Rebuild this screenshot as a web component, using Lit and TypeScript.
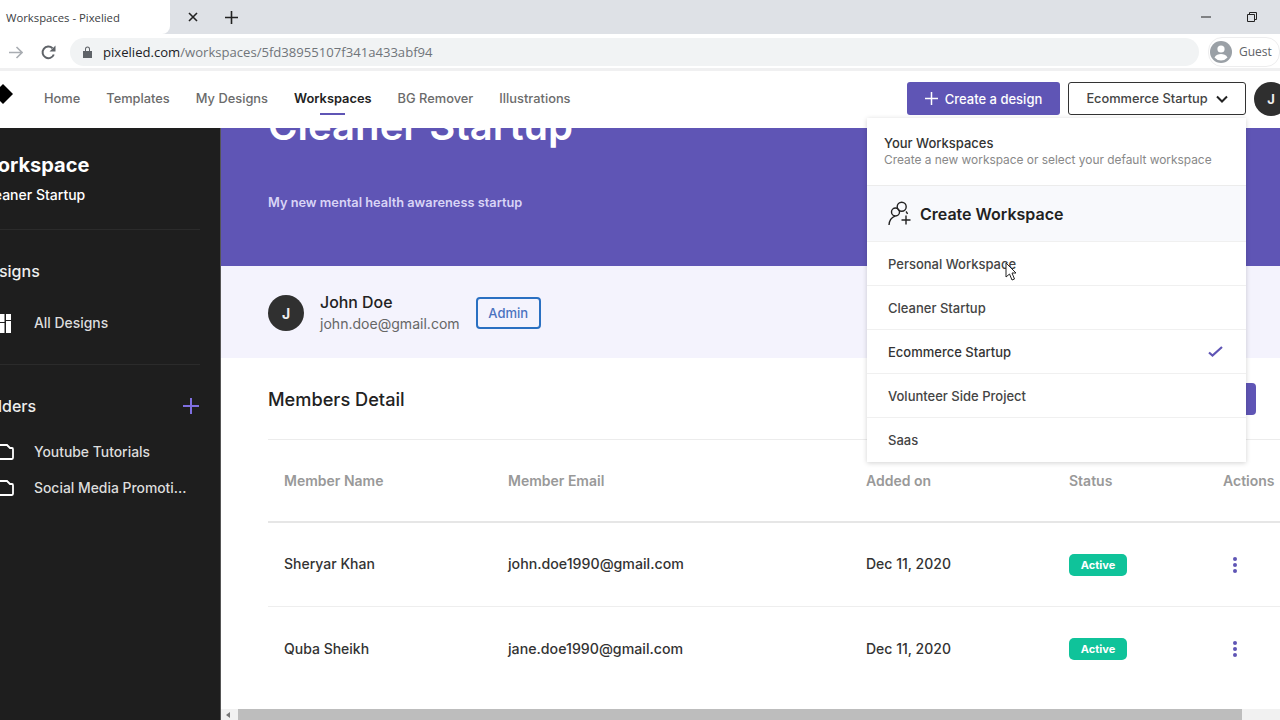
import { LitElement, html, css } from 'lit';
import { customElement } from 'lit/decorators.js';

const members = [
  { name: 'Sheryar Khan', email: 'john.doe1990@gmail.com' },
  { name: 'Quba Sheikh', email: 'jane.doe1990@gmail.com' },
];

const workspaces = ['Personal Workspace', 'Cleaner Startup', 'Ecommerce Startup', 'Volunteer Side Project', 'Saas'];

const folderIcon = html`<svg width="23" height="16" viewBox="0 0 23 16" fill="none" stroke="#fff" stroke-width="1.8"><path d="M0 1h16l3 3h2q1 0 1 1.5v8q0 1.5-1 1.5H0"/></svg>`;

@customElement('app-root')
export class AppRoot extends LitElement {
  static styles = css`
    :host {
      display: block;
      width: 1280px;
      height: 720px;
      position: relative;
      overflow: hidden;
      background: #fff;
      font-family: Inter, 'Liberation Sans', sans-serif;
      color: #222;
    }
    svg { display: block; flex: none; }

    /* browser chrome */
    .tabstrip { height: 34px; background: #dee1e6; display: flex; align-items: center; }
    .tab {
      width: 170px; height: 34px; background: #fff; border-bottom-right-radius: 8px;
      display: flex; align-items: center; padding-left: 6px; box-sizing: border-box;
      font: 11.3px 'Open Sans', 'Liberation Sans', sans-serif; color: #3c4043;
      flex: none; position: relative;
    }
    .tab-x { position: absolute; left: 188px; }
    .tab-plus { margin-left: 55px; }
    .winbtns { margin-left: auto; display: flex; align-items: center; gap: 36px; padding-right: 23px; }
    .toolbar {
      height: 34px; border-bottom: 3px solid #f0f0f1; display: flex; align-items: center;
      padding-left: 9px;
    }
    .tool-back { margin-top: 2px; }
    .tool-reload { margin-left: 18px; margin-top: 2px; }
    .address {
      flex: none; width: 1129px; height: 28px; margin-left: 14px; border-radius: 14px; background: #f1f3f4;
      display: flex; align-items: center; padding-left: 13px; box-sizing: border-box; margin-top: 1px;
      font: 13.1px 'Open Sans', 'Liberation Sans', sans-serif; color: #70757a;
    }
    .address b { font-weight: 400; color: #202124; }
    .lock { margin-right: 11px; }
    .guest {
      margin-left: 9px; height: 28px; flex: 1; display: flex; align-items: center; gap: 7px;
      border: 1px solid #ededee; border-radius: 14px; padding-left: 1px; margin-top: 1px;
      font: 12px 'Open Sans', 'Liberation Sans', sans-serif; color: #5f6368;
    }

    /* app nav */
    .nav {
      height: 57px; box-sizing: border-box; display: flex; align-items: center; position: relative;
      padding-bottom: 2px; background: #fff; z-index: 2;
    }
    .logo { width: 13px; height: 20px; margin-right: 31px; margin-top: -9px; flex: none; }
    .links { display: flex; gap: 26px; font-size: 12.85px; font-weight: 500; color: #6b6b6b; }
    .links a { position: relative; white-space: nowrap; }
    .links a.on { color: #222; font-weight: 600; }
    .links a.on::after {
      content: ''; position: absolute; left: 26px; width: 25px; height: 2px; bottom: -9px; background: #5f55b5;
    }
    .nav-right { margin-left: auto; display: flex; align-items: center; margin-right: -8px; }
    .create {
      width: 153px; height: 33px; background: #5f55b5; border-radius: 3px; color: #fff;
      display: flex; align-items: center; justify-content: center; gap: 7px; font-size: 13px; font-weight: 500;
    }
    .switch {
      width: 178px; height: 33px; box-sizing: border-box; margin-left: 8px; border: 1.5px solid #333;
      border-radius: 3px; display: flex; align-items: center; justify-content: center; gap: 8px;
      font-size: 12.8px; font-weight: 500; color: #444;
    }
    .nav-avatar {
      width: 34px; height: 34px; margin-left: 8px; border-radius: 50%; background: #2f2f2f; color: #eee;
      display: flex; align-items: center; justify-content: center; font-size: 13px; font-weight: 700;
    }

    /* main */
    .main { display: flex; height: 592px; }
    .side {
      width: 221px; flex: none; background: #1e1e1e; color: #fff; overflow: hidden;
      border-right: 1px solid #555; box-sizing: border-box; display: flex; flex-direction: column;
    }
    .side-head { padding: 24px 20px 0 0; margin-left: -22px; height: 77px; box-sizing: border-box; }
    .side-head h2 { margin: 0; font-size: 20px; font-weight: 700; line-height: 26px; }
    .side-head p { margin: 7px 0 0 2px; font-size: 14px; font-weight: 500; line-height: 20px; white-space: nowrap; }
    .divider { height: 1px; background: #2b2b2b; margin-right: 20px; margin-top: 24px; }
    .divider.lower { margin-top: 23px; }
    .sec-title {
      display: flex; align-items: center; justify-content: space-between; margin: 31px 21px 0 0;
      font-size: 16px; font-weight: 500; line-height: 20px; color: #eee;
    }
    .sec-title.designs { margin-left: -22px; }
    .sec-title.folders { margin-left: -20.5px; }
    .item {
      display: flex; align-items: center; font-size: 13.9px; font-weight: 500; color: #ddd; line-height: 20px;
      height: 36px; white-space: nowrap;
    }
    .item.first-design { margin-top: 24px; }
    .item.first-folder { margin-top: 18px; }
    .item svg { margin-left: -9px; }
    .item.first-design svg { margin-right: 23px; }
    .item.folder svg { margin-right: 20px; }
    .content { flex: 1; min-width: 0; display: flex; flex-direction: column; overflow: hidden; }
    .scroller { flex: 1; min-height: 0; overflow: hidden; }
    .banner { height: 138px; background: #5f55b5; padding-left: 47px; overflow: hidden; }
    .banner h1 {
      margin: -25px 0 0; font-size: 40.1px; font-weight: 600; line-height: 46px; color: #fff; white-space: nowrap;
    }
    .banner p { margin: 45px 0 0; font-size: 12.8px; font-weight: 600; line-height: 18px; color: #d9d4f6; }
    .owner {
      height: 92px; box-sizing: border-box; background: #f4f3fd; padding: 2px 0 0 47px; display: flex; align-items: center;
    }
    .avatar {
      width: 36px; height: 36px; border-radius: 50%; background: #303030; color: #eee; font-size: 14px;
      font-weight: 700; display: flex; align-items: center; justify-content: center; margin-right: 16px;
    }
    .owner-name { font-size: 15.9px; font-weight: 500; line-height: 20px; color: #222; margin-top: 1px; }
    .owner-mail { font-size: 14.05px; line-height: 20px; color: #666; margin-top: 1px; }
    .role {
      width: 65px; height: 32px; box-sizing: border-box; border: 2px solid #2a70c2; border-radius: 4px;
      margin-left: 16px; color: #4a72c0; font-size: 13px; font-weight: 500;
      display: flex; align-items: center; justify-content: center;
    }
    .members { margin-left: 47px; }
    .members-head {
      height: 82px; box-sizing: border-box; display: flex; align-items: center; justify-content: space-between;
      border-bottom: 1px solid #ececec; padding-right: 24px;
    }
    .members-head h3 { margin: 0; font-size: 18.2px; font-weight: 500; color: #222; }
    .add { width: 120px; height: 32px; background: #5f55b5; border-radius: 4px; }
    .row {
      display: grid; grid-template-columns: 224px 358px 203px 154px 80px; padding-left: 16px;
      align-items: center; white-space: nowrap; font-size: 14px; font-weight: 500; color: #333;
      height: 84px; border-bottom: 1px solid #eee; width: 1040px; box-sizing: border-box;
    }
    .row.head { height: 83px; border-bottom: 2px solid #e6e6e6; font-weight: 600; color: #999; }
    .row:last-child { border-bottom: none; }
    .cell { margin-top: -2px; }
    .mail { font-size: 14.2px; }
    .badge {
      width: 58px; height: 22px; border-radius: 5px; background: #0fc39a; color: #fff; font-size: 11px;
      font-weight: 700; display: flex; align-items: center; justify-content: center;
    }
    .dots { margin-left: 10px; }
    .hscroll { height: 11px; flex: none; background: #f1f1f1; display: flex; align-items: center; padding-left: 5px; }
    .thumb { height: 11px; width: 1004px; margin-left: 8px; background: #bdbdbd; }
    .arrow { width: 0; height: 0; border: 3.5px solid transparent; border-right: 4px solid #777; border-left: 0; }

    /* workspace menu */
    .menu {
      position: absolute; left: 867px; top: 118px; width: 379px; background: #fff; z-index: 3;
      box-shadow: 0 1px 5px rgba(0, 0, 0, 0.18);
    }
    .menu-head { height: 68px; box-sizing: border-box; padding: 17px 17px 0; border-bottom: 1px solid #ececec; }
    .menu-title { font-size: 13px; font-weight: 500; line-height: 16px; color: #333; }
    .menu-sub { font-size: 11.9px; line-height: 17px; color: #888; white-space: nowrap; }
    .menu-create {
      height: 56px; background: #f8f9fc; display: flex; align-items: center; padding-left: 21px; gap: 7px;
      font-size: 16px; font-weight: 600; color: #222; border-bottom: 1px solid #f0f0f0; box-sizing: border-box;
    }
    .menu-item {
      height: 44px; box-sizing: border-box; display: flex; align-items: center; justify-content: space-between;
      padding: 0 23px 0 21px; font-size: 13px; font-weight: 500; color: #444; border-bottom: 1px solid #f0f0f0;
    }
    .menu-item:last-child { border-bottom: none; }
    .menu-item.on { color: #333; }
    .cursor { position: absolute; left: 1005px; top: 262px; z-index: 4; }
  `;

  render() {
    return html`
      <div class="tabstrip">
        <div class="tab">
          Workspaces - Pixelied
          <svg class="tab-x" width="10" height="10" viewBox="0 0 10 10" stroke="#222" stroke-width="1.6"><path d="M1 1l8 8M9 1l-8 8"/></svg>
        </div>
        <svg class="tab-plus" width="13" height="13" viewBox="0 0 13 13" stroke="#222" stroke-width="1.6"><path d="M6.5 0v13M0 6.5h13"/></svg>
        <div class="winbtns">
          <svg width="10" height="10" viewBox="0 0 10 10" stroke="#222" stroke-width="1"><path d="M0 5h10"/></svg>
          <svg width="10" height="10" viewBox="0 0 10 10" fill="none" stroke="#222" stroke-width="1"><path d="M.5 2.5h7v7h-7zM2.5 2.5v-2h7v7h-2"/></svg>
        </div>
      </div>
      <div class="toolbar">
        <svg class="tool-back" width="14" height="13" viewBox="0 0 14 13" fill="none" stroke="#a9adb2" stroke-width="1.6"><path d="M0 6.5h13M7.5 1l5.5 5.5-5.5 5.5"/></svg>
        <svg class="tool-reload" width="15" height="15" viewBox="0 0 15 15" fill="none" stroke="#5f6368" stroke-width="2"><path d="M12.8 9.5A5.8 5.8 0 1 1 11.5 3.3"/><path d="M14.5 .5v6h-6z" fill="#5f6368" stroke="none"/></svg>
        <div class="address">
          <svg class="lock" width="9" height="12" viewBox="0 0 9 12"><path fill="#5f6368" d="M0 5h9v7H0zM2 5V3a2.5 2.5 0 0 1 5 0v2H6V3a1.5 1.5 0 0 0-3 0v2z"/></svg>
          <span><b>pixelied.com</b>/workspaces/5fd38955107f341a433abf94</span>
        </div>
        <div class="guest">
          <svg width="22" height="22" viewBox="0 0 22 22"><circle cx="11" cy="11" r="11" fill="#9aa0a6"/><circle cx="11" cy="8" r="3.6" fill="#fff"/><path fill="#fff" d="M4.5 16.5c1.4-2.6 4-3.5 6.5-3.5s5.1.9 6.5 3.5a8.5 8.5 0 0 1-13 0z"/></svg>
          Guest
        </div>
      </div>

      <div class="nav">
        <svg class="logo" viewBox="0 0 13 20"><path d="M3 0l10 10-10 10L-7 10z" fill="#000"/></svg>
        <div class="links">
          <a>Home</a><a>Templates</a><a>My Designs</a><a class="on">Workspaces</a><a>BG Remover</a><a>Illustrations</a>
        </div>
        <div class="nav-right">
          <div class="create">
            <svg width="13" height="13" viewBox="0 0 13 13" stroke="#fff" stroke-width="1.5"><path d="M6.5 0v13M0 6.5h13"/></svg>
            Create a design
          </div>
          <div class="switch">
            Ecommerce Startup
            <svg width="12" height="8" viewBox="0 0 12 8" fill="none" stroke="#222" stroke-width="2"><path d="M1 1.5l5 5 5-5"/></svg>
          </div>
          <div class="nav-avatar">J</div>
        </div>
      </div>

      <div class="main">
        <aside class="side">
          <div class="side-head">
            <h2>Workspace</h2>
            <p>Cleaner Startup</p>
          </div>
          <div class="divider"></div>
          <div class="sec-title designs">Designs</div>
          <div class="item first-design">
            <svg width="20" height="19" viewBox="0 0 20 19" fill="#fff"><rect width="13.5" height="8"/><rect y="9" width="13.5" height="10"/><rect x="15" width="5" height="6"/><rect x="15" y="7" width="5" height="12"/></svg>
            All Designs
          </div>
          <div class="divider lower"></div>
          <div class="sec-title folders">Folders
            <svg width="16" height="16" viewBox="0 0 16 16" stroke="#7f6fe0" stroke-width="2"><path d="M8 0v16M0 8h16"/></svg>
          </div>
          <div class="item folder first-folder">${folderIcon} Youtube Tutorials</div>
          <div class="item folder">${folderIcon} Social Media Promoti...</div>
        </aside>

        <section class="content">
          <div class="scroller">
            <div class="banner">
              <h1>Cleaner Startup</h1>
              <p>My new mental health awareness startup</p>
            </div>
            <div class="owner">
              <div class="avatar">J</div>
              <div>
                <div class="owner-name">John Doe</div>
                <div class="owner-mail">john.doe@gmail.com</div>
              </div>
              <div class="role">Admin</div>
            </div>
            <div class="members">
              <div class="members-head">
                <h3>Members Detail</h3>
                <div class="add"></div>
              </div>
              <div class="row head">
                <div>Member Name</div><div>Member Email</div><div>Added on</div><div>Status</div><div>Actions</div>
              </div>
              ${members.map(
                (m) => html`
                  <div class="row">
                    <div class="cell">${m.name}</div>
                    <div class="cell mail">${m.email}</div>
                    <div class="cell">Dec 11, 2020</div>
                    <div><div class="badge">Active</div></div>
                    <div>
                      <svg class="dots" width="4" height="16" viewBox="0 0 4 16" fill="#5f55b5"><circle cx="2" cy="2" r="2"/><circle cx="2" cy="8" r="2"/><circle cx="2" cy="14" r="2"/></svg>
                    </div>
                  </div>
                `
              )}
            </div>
          </div>
          <div class="hscroll"><div class="arrow"></div><div class="thumb"></div></div>
        </section>
      </div>

      <div class="menu">
        <div class="menu-head">
          <div class="menu-title">Your Workspaces</div>
          <div class="menu-sub">Create a new workspace or select your default workspace</div>
        </div>
        <div class="menu-create">
          <svg width="25" height="25" viewBox="0 0 25 25" fill="none" stroke="#222" stroke-width="1.4">
            <circle cx="13.7" cy="5.7" r="4.5"/><circle cx="7.5" cy="11" r="4"/>
            <path d="M1 24c.3-4.5 2.5-7.5 6-8.8M18 10.5q1 1 1.5 2.5M18 14.5v9M13.5 19h9"/>
          </svg>
          Create Workspace
        </div>
        ${workspaces.map(
          (w) => html`
            <div class="menu-item ${w === 'Ecommerce Startup' ? 'on' : ''}">
              ${w}
              ${w === 'Ecommerce Startup'
                ? html`<svg width="15" height="11" viewBox="0 0 15 11" fill="none" stroke="#5f55b5" stroke-width="2.2"><path d="M1 6.5l3.5 3L14 1"/></svg>`
                : ''}
            </div>
          `
        )}
      </div>
      <svg class="cursor" width="12" height="19" viewBox="0 0 12 19"><path d="M1 1v14l3.5-3 2.5 6 2.5-1-2.5-6H11z" fill="#fff" stroke="#222" stroke-width="1"/></svg>
    `;
  }
}
